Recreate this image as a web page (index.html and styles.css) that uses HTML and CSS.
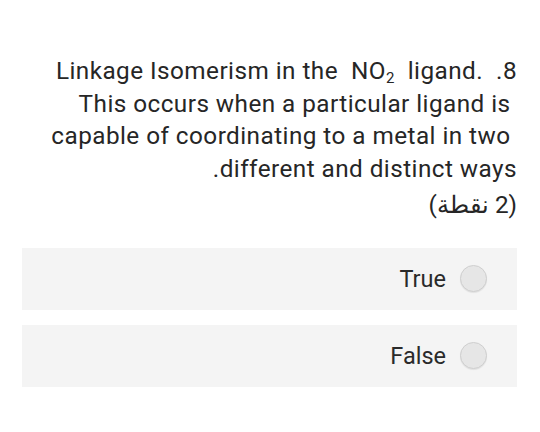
FILE: index.html
```html
<!DOCTYPE html>
<html>
<head>
<meta charset="utf-8">
<link rel="stylesheet" href="styles.css">
</head>
<body>
<div class="page">
  <div class="question">
    <p class="line">Linkage Isomerism in the&nbsp; NO<sub>2</sub>&nbsp; ligand.&nbsp; .8</p>
    <p class="line">This occurs when a particular ligand is&nbsp;</p>
    <p class="line">capable of coordinating to a metal in two&nbsp;</p>
    <p class="line">.different and distinct ways</p>
    <p class="line points" dir="rtl">(2 نقطة)</p>
  </div>
  <div class="options">
    <label class="option"><span class="label">True</span><span class="radio"></span></label>
    <label class="option"><span class="label">False</span><span class="radio"></span></label>
  </div>
</div>
</body>
</html>
```
FILE: styles.css
```css
html, body {
  margin: 0;
  padding: 0;
  background: #ffffff;
}
body {
  font-family: Roboto, "Noto Sans", "Liberation Sans", sans-serif;
  color: #262626;
}
.page {
  width: 540px;
  height: 432px;
  box-sizing: border-box;
  padding: 55px 23px 0 22px;
}
.question {
  text-align: right;
  font-size: 24.3px;
  letter-spacing: 0.45px;
  line-height: 32.5px;
}
.line {
  margin: 0;
  white-space: nowrap;
}
.line sub {
  font-size: 15px;
  line-height: 0;
  vertical-align: -4px;
}
.points {
  text-align: right;
  margin-top: 4px;
  letter-spacing: 0;
}
.options {
  margin-top: 26px;
  display: flex;
  flex-direction: column;
  gap: 15px;
}
.option {
  background: #f4f4f4;
  height: 62px;
  display: flex;
  align-items: center;
  justify-content: flex-end;
  padding-right: 30px;
}
.label {
  font-size: 23.5px;
  color: #2a2a2a;
  margin-right: 14px;
}
.radio {
  width: 25px;
  height: 25px;
  border-radius: 50%;
  background: #e6e6e6;
  border: 1px solid #cfcfcf;
  box-shadow: 0 1px 1px rgba(0,0,0,0.08);
}
```
